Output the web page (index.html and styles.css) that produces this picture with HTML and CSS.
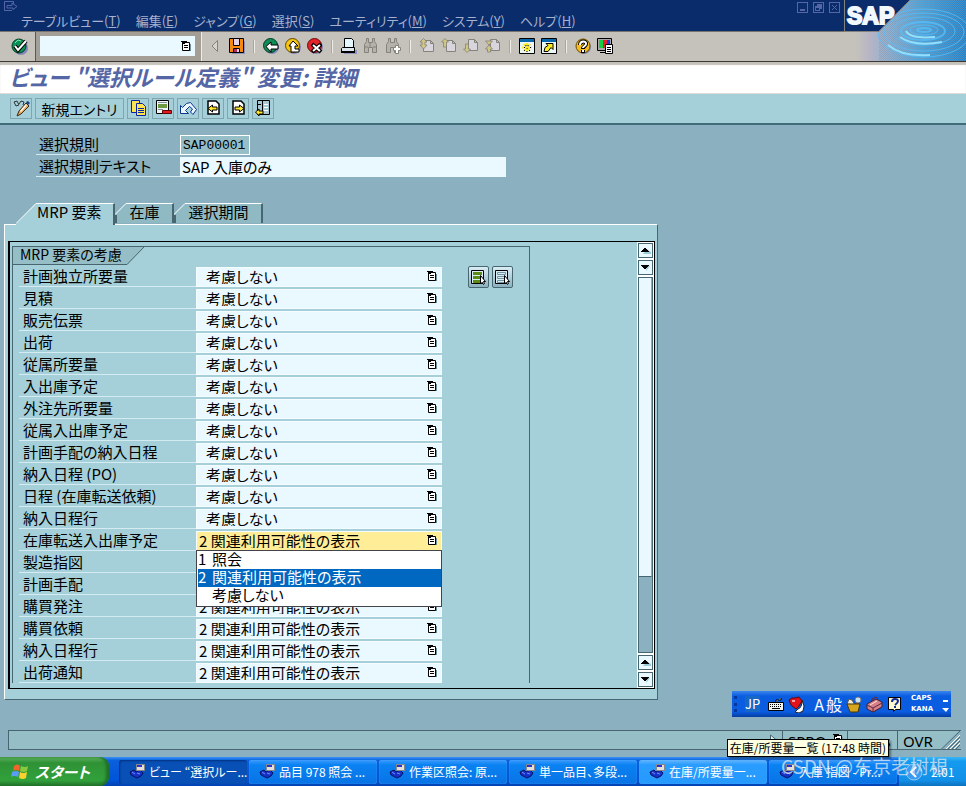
FILE: index.html
```html
<!DOCTYPE html>
<html lang="ja">
<head>
<meta charset="utf-8">
<title>ビュー "選択ルール定義" 変更: 詳細</title>
<link rel="stylesheet" href="styles.css">
</head>
<body>
<svg class="sprite" aria-hidden="true">
  <symbol id="list" viewBox="0 0 10 11"><path fill="#6f8f9b" d="M3 10h7V3H9v6H3z"/><path fill="#fff" stroke="#000" d="M1.500 1.500h7v8h-7z"/><path fill="#000" d="M0 0h6v1H5v1H4v1H2V2H1V1H0zM3 4h4v1H3zM3 6h4v1H3z"/></symbol>
  <symbol id="check" viewBox="0 0 18 18"><circle cx="10" cy="10" r="7" fill="#8287b9"/><circle cx="8" cy="8" r="7" fill="#079356" stroke="#033b25"/><path d="M4 5l3-3 3 1" stroke="#7fe2b4" fill="none"/><path d="M4 8l3 4 8-9" fill="none" stroke="#000" stroke-width="4"/><path d="M4 8l3 4 8-9" fill="none" stroke="#fff" stroke-width="2"/></symbol>
  <symbol id="save" viewBox="0 0 17 17"><path fill="#8f94bd" d="M3 3h13v13H3z"/><path fill="#f68a11" stroke="#000" d="M.5.5h14v14H.5z"/><path fill="#e6d3e7" stroke="#000" d="M4.500.5h6v7h-6zM4.500 10.500h6v4h-6z"/><path fill="#a6305e" d="M5 11h3v3H5z"/></symbol>
  <symbol id="back" viewBox="0 0 17 17"><circle cx="9" cy="9" r="7" fill="#8287b9"/><circle cx="7.500" cy="7.500" r="7" fill="#108d56" stroke="#033b25"/><path fill="#fff" stroke="#000" d="M3 8.500L8 4v3h7v4H8v3z"/></symbol>
  <symbol id="exit" viewBox="0 0 17 17"><circle cx="9" cy="9" r="7" fill="#8287b9"/><circle cx="7.500" cy="7.500" r="7" fill="#f5c513" stroke="#5e4a00"/><path fill="#fff" stroke="#000" d="M4 8l4-5 5 5h-3v3h4v3H6V8z"/></symbol>
  <symbol id="cancel" viewBox="0 0 17 17"><circle cx="9" cy="9" r="7" fill="#8287b9"/><circle cx="7.500" cy="7.500" r="7" fill="#e4232b" stroke="#6d080c"/><path stroke="#000" stroke-width="4" d="M5 6l9 8M14 6l-9 8"/><path stroke="#fff" stroke-width="2" d="M6 7l7 6M13 7l-7 6"/></symbol>
  <symbol id="print" viewBox="0 0 17 17"><path fill="#8f94bd" d="M3 12h13v4H3z"/><path fill="#e6f8ff" stroke="#000" d="M3.500.5h7l2 2v7h-9z"/><path fill="#dce6ec" stroke="#000" d="M1.500 9.500h12v4H.500v-3z"/><path d="M0 14h14" stroke="#000" stroke-width="2"/></symbol>
  <symbol id="find" viewBox="0 0 17 17"><path fill="#b5b2ab" stroke="#85827b" d="M3.500.5h2v4h4v-4h2v3l2 3v8h-4v-5h-4v5h-4v-8l2-3z"/><path d="M7 5v5M2 9h3M10 9h3" stroke="#85827b" fill="none"/></symbol>
  <symbol id="findn" viewBox="0 0 17 17"><path fill="#b5b2ab" stroke="#85827b" d="M3.500.5h2v4h4v-4h2v3l2 3v8h-4v-5h-4v5h-4v-8l2-3z"/><path fill="#fff" stroke="#85827b" d="M10.500 7.500h3v2h2v3h-2v3h-3v-3h-2v-3h2z"/></symbol>
  <symbol id="first" viewBox="0 0 17 17"><path fill="#d9d5dd" stroke="#85827b" d="M4.500 2.500h7l3 3v8h-10zM11.500 2.500v3h3"/><path fill="#d0c783" stroke="#85827b" stroke-width=".8" d="M1 4l3.500-3.500L8 4H6v3h2l-3.500 4L1 7h2V4z"/></symbol>
  <symbol id="prev" viewBox="0 0 17 17"><path fill="#d9d5dd" stroke="#85827b" d="M5.500 2.500h6l3 3v8h-9zM11.500 2.500v3h3"/><path fill="#d0c783" stroke="#85827b" stroke-width=".8" d="M.5 4L4 .5 7.500 4H5.500v5h-3V4z"/></symbol>
  <symbol id="next" viewBox="0 0 17 17"><path fill="#d9d5dd" stroke="#85827b" d="M5.500 1.500h6l3 3v8h-9zM11.500 1.500v3h3"/><path fill="#d0c783" stroke="#85827b" stroke-width=".8" d="M.5 11L4 14.500 7.500 11H5.500V6h-3v5z"/></symbol>
  <symbol id="last" viewBox="0 0 17 17"><path fill="#d9d5dd" stroke="#85827b" d="M5.500 1.500h6l3 3v8h-9zM11.500 1.500v3h3"/><path fill="#d0c783" stroke="#85827b" stroke-width=".8" d="M.5 3h7L4 7zM.5 11L4 7l3.500 4h-2v3h-3v-3z"/></symbol>
  <symbol id="session" viewBox="0 0 17 17"><path fill="#edf8f6" stroke="#000" d="M.5.5h15v15H.5z"/><path fill="#0868ae" d="M1 1h14v3H1z"/><path stroke="#000" d="M8 5v9M3 9.500h10M5 6l6 7M11 6l-6 7"/><path stroke="#ffed23" stroke-width="2" stroke-dasharray="2 1" d="M8 5v9M3 9.500h10M5 6l6 7M11 6l-6 7"/></symbol>
  <symbol id="shortcut" viewBox="0 0 17 17"><path fill="#edf8f6" stroke="#000" d="M.5.5h15v15H.5z"/><path fill="#0868ae" d="M1 1h14v3H1z"/><path fill="#ffed23" stroke="#000" d="M5 5.500h7v6l-2-2-3 4H3l1-4 3-2z"/></symbol>
  <symbol id="help" viewBox="0 0 17 17"><circle cx="9" cy="9" r="7" fill="#8287b9"/><circle cx="8" cy="8" r="7" fill="#f5bc20" stroke="#6e4c00"/><path d="M5 7c0-5 7-4 6-1 0 2-3 2-3 5M8 12v3" fill="none" stroke="#000" stroke-width="4"/><path d="M5 7c0-5 7-4 6-1 0 2-3 2-3 4M8 12v2" fill="none" stroke="#fff" stroke-width="2"/></symbol>
  <symbol id="layout" viewBox="0 0 17 17"><path fill="#aaa" stroke="#000" d="M.5.500h14v12H.5zM3 14.500h7"/><path fill="#17ce40" d="M2 2h4v8H2z"/><path fill="#e71f2d" d="M6 2h4v8H6z"/><path fill="#173bd6" d="M10 2h3v8h-3z"/><path fill="#fff" stroke="#000" d="M8.500 6.500h7v9h-7zM10 9.500h4M10 11.500h4M10 13.500h4"/></symbol>
  <symbol id="edit" viewBox="0 0 17 17"><path fill="none" stroke="#222" stroke-width=".9" d="M1 2l3-1 2 4-3 1zM6 4l2-3 3 1-1 3"/><path fill="#eaa750" stroke="#382819" d="M6 11l7-8 3 3-8 8-4 2z"/><path fill="#fff" d="M7 11l6-7 1 1-6 7z"/><path fill="#14448c" d="M13 2l2-1 2 2-2 2z"/></symbol>
  <symbol id="copy" viewBox="0 0 17 17"><path fill="#ffe451" stroke="#0824a5" d="M1.500.5h8v12h-8z"/><path fill="#ffe451" stroke="#0824a5" d="M6.500 3.500h6l3 3v9h-9z"/><path d="M8 8.500h6M8 10.500h6M8 12.500h6" stroke="#0824a5"/></symbol>
  <symbol id="delete" viewBox="0 0 17 17"><path fill="#edf8f6" stroke="#000" d="M1.500.5h12v13h-12z"/><path fill="#6d9a42" d="M3 4h9v4H3z"/><path stroke="#7c8f98" d="M3 2.500h9M3 9.500h5"/><path fill="#e6171f" stroke="#5e0407" d="M7.500 10.500h9v3h-9z"/></symbol>
  <symbol id="undo" viewBox="0 0 17 17"><path fill="#ebf6ff" stroke="#0b348e" d="M.5 5.500v8h8l-3-3 4-4 3 2.500-2 3 2.500 2.500 3.500-5-6-7-4 1-4 4z"/></symbol>
  <symbol id="pleft" viewBox="0 0 17 17"><path fill="#fff" stroke="#000" stroke-width="1.500" d="M3 1h8l3 3v10H3z"/><path fill="#ffe52c" stroke="#000" d="M3 8.500L7.500 5v2H12v3H7.500v2z"/></symbol>
  <symbol id="pright" viewBox="0 0 17 17"><path fill="#fff" stroke="#000" stroke-width="1.500" d="M3 1h8l3 3v10H3z"/><path fill="#ffe52c" stroke="#000" d="M14 8.500L9.500 5v2H5v3h4.500v2z"/></symbol>
  <symbol id="position" viewBox="0 0 17 17"><path fill="#a7c7d4" stroke="#000" d="M2.500.5h12v14h-12zM7.500.5v14"/><path d="M9 4.500h4M9 7.500h4M9 10.500h4" stroke="#fff"/><path fill="#ffe52c" stroke="#000" d="M.5 12L4 9v2h4v3H4v2z"/><path d="M3 4.500h3" stroke="#000"/></symbol>
  <symbol id="selall" viewBox="0 0 17 17"><path fill="#d9edf4" stroke="#000" d="M1.500 1.500h12v13h-12z"/><path stroke="#5b8b16" stroke-width="3" d="M3 4.500h9M3 8.500h9M3 12.500h9"/><path fill="#fff" stroke="#000" d="M10.500 6.500v8l2-1 1 2 1-1-1-2h2z"/></symbol>
  <symbol id="selnone" viewBox="0 0 17 17"><path fill="#d9edf4" stroke="#000" d="M1.500 1.500h12v13h-12z"/><path fill="none" stroke="#7392a0" d="M3.500 3.500h8v2h-8zM3.500 7.500h8v2h-8zM3.500 11.500h8v2h-8z"/><path fill="#fff" stroke="#000" d="M10.500 6.500v8l2-1 1 2 1-1-1-2h2z"/></symbol>
  <symbol id="up" viewBox="0 0 11 9"><path fill="#9ccbd7" d="M3 8h8V6L7 3z"/><path d="M1 6h8V5H8V4H7V3H6V2H4v1H3v1H2v1H1z"/></symbol>
  <symbol id="down" viewBox="0 0 11 9"><path fill="#9ccbd7" d="M6 8l4-5-3-1z"/><path d="M1 2h8v1H8v1H7v1H6v1H4V5H3V4H2V3H1z"/></symbol>
  <symbol id="app" viewBox="0 0 17 17"><path fill="#1730c8" stroke="#001264" d="M1 9l4-2 2 2 4-2 3 3-2 3-4 2-6-3z"/><path stroke="#6f8bff" d="M3 9l3 2M8 10l3 1"/><path fill="#e3dfda" stroke="#888" d="M7.500 1.500h8v6h-8z"/><path fill="#2634d6" d="M8 2h5v2H8z"/></symbol>
</svg>

<header class="head">
  <nav class="menubar">
    <svg class="sysicon" width="16" height="12" viewBox="0 0 16 12"><path fill="none" stroke="#5466a5" d="M10 10.500H2.500v-9h9V4M5 5.500h5V3l5 3.500-4 3V8H5z"/></svg>
    <a href="#">テーブルビュー(<u>T</u>)</a><a href="#">編集(<u>E</u>)</a><a href="#">ジャンプ(<u>G</u>)</a><a href="#">選択(<u>S</u>)</a><a href="#">ユーティリティ(<u>M</u>)</a><a href="#">システム(<u>Y</u>)</a><a href="#">ヘルプ(<u>H</u>)</a>
    <div class="winbtns">
      <button aria-label="最小化"><svg viewBox="0 0 11 11"><path fill="#5466a5" d="M3 7h5v2H3z"/></svg></button>
      <button aria-label="元に戻す"><svg viewBox="0 0 11 11"><path fill="#5466a5" d="M4 2h5v5H7v2H2V4h2z"/><path fill="#0a2c6b" d="M3 6h3v2H3z"/></svg></button>
      <button aria-label="閉じる"><svg viewBox="0 0 11 11"><path stroke="#5466a5" d="M3 3l5 5M8 3L3 8"/></svg></button>
    </div>
  </nav>
  <div class="toolbar">
    <button class="tool enter" aria-label="実行"><svg><use href="#check"/></svg></button>
    <div class="command"><input type="text" aria-label="コマンド"><svg class="listicon"><use href="#list"/></svg></div>
    <button class="tool narrow" aria-label="閉じる"><svg viewBox="0 0 17 17"><path fill="#d6d3cc" stroke="#85827b" d="M10.500 2.500v11L5 8z"/></svg></button>
    <button class="tool" aria-label="保存"><svg><use href="#save"/></svg></button>
    <i class="sep"></i>
    <button class="tool" aria-label="戻る"><svg><use href="#back"/></svg></button>
    <button class="tool" aria-label="終了"><svg><use href="#exit"/></svg></button>
    <button class="tool" aria-label="取消"><svg><use href="#cancel"/></svg></button>
    <i class="sep"></i>
    <button class="tool" aria-label="印刷"><svg><use href="#print"/></svg></button>
    <button class="tool" aria-label="検索"><svg><use href="#find"/></svg></button>
    <button class="tool" aria-label="次を検索"><svg><use href="#findn"/></svg></button>
    <i class="sep"></i>
    <button class="tool" aria-label="最初のページ"><svg><use href="#first"/></svg></button>
    <button class="tool" aria-label="前ページ"><svg><use href="#prev"/></svg></button>
    <button class="tool" aria-label="次ページ"><svg><use href="#next"/></svg></button>
    <button class="tool" aria-label="最終ページ"><svg><use href="#last"/></svg></button>
    <i class="sep"></i>
    <button class="tool" aria-label="新規セッション"><svg><use href="#session"/></svg></button>
    <button class="tool" aria-label="ショートカット"><svg><use href="#shortcut"/></svg></button>
    <i class="sep"></i>
    <button class="tool" aria-label="ヘルプ"><svg><use href="#help"/></svg></button>
    <button class="tool" aria-label="レイアウト"><svg><use href="#layout"/></svg></button>
  </div>
  <svg class="logo" viewBox="0 0 122 61">
    <defs>
      <linearGradient id="water"><stop offset="0" stop-color="#c5c2bb"/><stop offset=".12" stop-color="#b7b5c4"/><stop offset=".3" stop-color="#90b1d2"/><stop offset=".6" stop-color="#4aa5de"/><stop offset="1" stop-color="#1b84cf"/></linearGradient>
      <pattern id="dots" width="2" height="2" patternUnits="userSpaceOnUse"><path fill="#8290a5" fill-opacity=".45" d="M0 0h1v1H0zM1 1h1v1H1z"/></pattern>
    </defs>
    <path fill="url(#water)" d="M12 0h110v61H12z"/>
    <path fill="url(#dots)" d="M35 0h87v61H35z"/>
    <g fill="none" stroke="#59bdf8" stroke-opacity=".8">
      <ellipse cx="80" cy="30" rx="7" ry="2" stroke-width="2"/><ellipse cx="80" cy="30" rx="14" ry="5"/><ellipse cx="79" cy="31" rx="22" ry="9" stroke-width="2"/><ellipse cx="80" cy="31" rx="31" ry="14"/><ellipse cx="80" cy="32" rx="40" ry="19"/><ellipse cx="80" cy="33" rx="46" ry="24"/>
    </g>
    <g fill="none" stroke="#91e0ff" stroke-width="2"><path d="M56 37q14 10 42 5M44 45q14 12 42 10M62 31q4 8 29 6"/></g>
    <path fill="#0a2c6b" d="M0 0h66L35 31H0z"/>
    <path fill="none" stroke="#85827b" d="M.5 0v31.500H35L66 0"/>
    <text x="3" y="24" class="logotext">SAP</text>
  </svg>
</header>

<h1>ビュー "選択ルール定義" 変更: 詳細</h1>

<div class="appbar">
  <button aria-label="変更"><svg><use href="#edit"/></svg></button>
  <button class="wide">新規エントリ</button>
  <button aria-label="コピー"><svg><use href="#copy"/></svg></button>
  <button aria-label="削除"><svg><use href="#delete"/></svg></button>
  <button aria-label="元に戻す"><svg><use href="#undo"/></svg></button>
  <button aria-label="前エントリ"><svg><use href="#pleft"/></svg></button>
  <button aria-label="次エントリ"><svg><use href="#pright"/></svg></button>
  <button aria-label="位置付け"><svg><use href="#position"/></svg></button>
</div>

<main>
  <div class="keys">
    <label for="rule">選択規則</label><input id="rule" class="key" value="SAP00001" readonly>
    <label for="ruletext">選択規則テキスト</label><input id="ruletext" value="SAP 入庫のみ">
  </div>

  <div class="tabs" role="tablist">
    <button class="tab active" role="tab" aria-selected="true"><svg width="21" height="22" viewBox="0 0 21 22"><path fill="#a5d0d9" d="M0 22v-1L20 0h1v22z"/><path fill="none" stroke="#fff" d="M0 20.500L20 .5h1"/></svg><span>MRP 要素</span></button>
    <button class="tab" role="tab"><svg width="12" height="20" viewBox="0 0 12 20"><path fill="#8fbac4" d="M0 20V11L11 0h1v20z"/><path fill="none" stroke="#fff" d="M0 11.500L11 .5h1"/><path stroke="#47666f" stroke-width="2" d="M1 12v8"/></svg><span>在庫</span></button>
    <button class="tab" role="tab"><svg width="12" height="20" viewBox="0 0 12 20"><path fill="#8fbac4" d="M0 20V11L11 0h1v20z"/><path fill="none" stroke="#fff" d="M0 11.500L11 .5h1"/><path stroke="#47666f" stroke-width="2" d="M1 12v8"/></svg><span>選択期間</span></button>
  </div>

  <section class="panel">
    <div class="scrollbox">
      <div class="group">
        <h2><span>MRP 要素の考慮</span><svg width="19" height="18" viewBox="0 0 19 18"><path fill="#95bec7" d="M0 0h18L1 18H0z"/><path d="M18 0L1 17.500H0" fill="none" stroke="#47666f"/></svg></h2>
        <div class="groupbody">
          <div class="rows">
            <div class="row"><label for="r1">計画独立所要量</label><span class="pick none"><select id="r1"><option>考慮しない</option></select><svg class="listicon"><use href="#list"/></svg></span></div>
            <div class="row"><label for="r2">見積</label><span class="pick none"><select id="r2"><option>考慮しない</option></select><svg class="listicon"><use href="#list"/></svg></span></div>
            <div class="row"><label for="r3">販売伝票</label><span class="pick none"><select id="r3"><option>考慮しない</option></select><svg class="listicon"><use href="#list"/></svg></span></div>
            <div class="row"><label for="r4">出荷</label><span class="pick none"><select id="r4"><option>考慮しない</option></select><svg class="listicon"><use href="#list"/></svg></span></div>
            <div class="row"><label for="r5">従属所要量</label><span class="pick none"><select id="r5"><option>考慮しない</option></select><svg class="listicon"><use href="#list"/></svg></span></div>
            <div class="row"><label for="r6">入出庫予定</label><span class="pick none"><select id="r6"><option>考慮しない</option></select><svg class="listicon"><use href="#list"/></svg></span></div>
            <div class="row"><label for="r7">外注先所要量</label><span class="pick none"><select id="r7"><option>考慮しない</option></select><svg class="listicon"><use href="#list"/></svg></span></div>
            <div class="row"><label for="r8">従属入出庫予定</label><span class="pick none"><select id="r8"><option>考慮しない</option></select><svg class="listicon"><use href="#list"/></svg></span></div>
            <div class="row"><label for="r9">計画手配の納入日程</label><span class="pick none"><select id="r9"><option>考慮しない</option></select><svg class="listicon"><use href="#list"/></svg></span></div>
            <div class="row"><label for="r10">納入日程 (PO)</label><span class="pick none"><select id="r10"><option>考慮しない</option></select><svg class="listicon"><use href="#list"/></svg></span></div>
            <div class="row"><label for="r11">日程 (在庫転送依頼)</label><span class="pick none"><select id="r11"><option>考慮しない</option></select><svg class="listicon"><use href="#list"/></svg></span></div>
            <div class="row"><label for="r12">納入日程行</label><span class="pick none"><select id="r12"><option>考慮しない</option></select><svg class="listicon"><use href="#list"/></svg></span></div>
            <div class="row"><label for="r13">在庫転送入出庫予定</label><span class="pick open"><select id="r13"><option>2 関連利用可能性の表示</option></select><svg class="listicon"><use href="#list"/></svg>
              <ul class="menu" role="listbox"><li role="option"><b>1</b>照会</li><li role="option" aria-selected="true"><b>2</b>関連利用可能性の表示</li><li role="option"><b></b>考慮しない</li></ul></span></div>
            <div class="row"><label for="r14">製造指図</label><span class="pick"><select id="r14"><option>2 関連利用可能性の表示</option></select><svg class="listicon"><use href="#list"/></svg></span></div>
            <div class="row"><label for="r15">計画手配</label><span class="pick"><select id="r15"><option>2 関連利用可能性の表示</option></select><svg class="listicon"><use href="#list"/></svg></span></div>
            <div class="row"><label for="r16">購買発注</label><span class="pick"><select id="r16"><option>2 関連利用可能性の表示</option></select><svg class="listicon"><use href="#list"/></svg></span></div>
            <div class="row"><label for="r17">購買依頼</label><span class="pick"><select id="r17"><option>2 関連利用可能性の表示</option></select><svg class="listicon"><use href="#list"/></svg></span></div>
            <div class="row"><label for="r18">納入日程行</label><span class="pick"><select id="r18"><option>2 関連利用可能性の表示</option></select><svg class="listicon"><use href="#list"/></svg></span></div>
            <div class="row"><label for="r19">出荷通知</label><span class="pick"><select id="r19"><option>2 関連利用可能性の表示</option></select><svg class="listicon"><use href="#list"/></svg></span></div>
          </div>
          <div class="selbtns">
            <button aria-label="全選択"><svg><use href="#selall"/></svg></button>
            <button aria-label="全選択解除"><svg><use href="#selnone"/></svg></button>
          </div>
        </div>
      </div>
      <div class="scrollbar">
        <button aria-label="上へ"><svg><use href="#up"/></svg></button>
        <button aria-label="下へ"><svg><use href="#down"/></svg></button>
        <div class="track"><div class="thumb"></div></div>
        <button aria-label="上へ"><svg><use href="#up"/></svg></button>
        <button aria-label="下へ"><svg><use href="#down"/></svg></button>
      </div>
    </div>
  </section>
</main>

<footer class="status">
  <span class="message"></span>
  <svg class="expander" width="12" height="18" viewBox="0 0 12 18"><path fill="#dff2f6" stroke="#47666f" d="M1.500 4v11L8 9.500z"/></svg>
  <span class="cell">SPRO</span>
  <svg class="cellicon"><use href="#list"/></svg>
  <span class="cell system">ps-ps</span>
  <span class="cell ovr">OVR</span>
  <svg class="grip" width="21" height="20" viewBox="0 0 21 20"><path fill="#95bec7" d="M0 0h20L1 20H0z"/><path fill="none" stroke="#47666f" d="M0 .5h20M20 1L1 19.500H0"/><path stroke="#47666f" d="M7 20L20 7M11 20l9-9M15 20l5-5"/><path stroke="#fff" d="M6 19L20 5M10 19L20 9M14 19l6-6"/></svg>
</footer>

<div class="taskbar">
  <button class="start"><svg width="18" height="18" viewBox="0 0 18 18"><path fill="#f26429" d="M3 3q3-3 6 0L8 8Q5 6 2 8z"/><path fill="#88c93e" d="M10 3q4 2 7 0l-1 5q-3 2-7 0z"/><path fill="#5b9cf5" d="M1 9q4-2 7 0l-1 5q-4-2-7 0z"/><path fill="#fbd22c" d="M9 9q3 2 7 0l-1 6q-3 2-7 0z"/></svg>スタート</button>
  <button class="task current"><svg><use href="#app"/></svg>ビュー “選択ルー...</button>
  <button class="task"><svg><use href="#app"/></svg>品目 978 照会 ...</button>
  <button class="task"><svg><use href="#app"/></svg>作業区照会: 原...</button>
  <button class="task"><svg><use href="#app"/></svg>単一品目、多段...</button>
  <button class="task hover"><svg><use href="#app"/></svg>在庫/所要量一...</button>
  <button class="task"><svg><use href="#app"/></svg>入庫 指図 - Pr...</button>
  <div class="tray"><svg width="18" height="18" viewBox="0 0 18 18"><circle cx="9" cy="9" r="8" fill="#3b9bf0" stroke="#8fc8f8"/><path d="M11 4L6 9l5 5" fill="none" stroke="#fff" stroke-width="2"/></svg><time>2:01</time></div>
</div>

<div class="langbar">
  <i class="handle"></i><span class="jp">JP</span>
  <svg width="17" height="17" viewBox="0 0 17 17"><path fill="#f4f4ee" stroke="#000" d="M.5 6.500h15v8H.5zM8 6V4h5V2"/><path stroke="#000" stroke-dasharray="1 1" d="M2 8.500h12M2 10.500h12"/><path stroke="#000" d="M4 12.500h8"/></svg>
  <svg width="17" height="17" viewBox="0 0 17 17"><path fill="#fff" stroke="#222" d="M10 13q4-1 4-9l2 6-1 5-4 2-4-1z"/><path fill="#e1121c" stroke="#640509" d="M1 4l3-2 3 0 4-1 3 4-3 5-3 3-5-4z"/><path fill="#ff9ca1" d="M4 4h3v2H4z"/></svg>
  <span class="mode">A</span><span class="mode">般</span>
  <svg width="17" height="17" viewBox="0 0 17 17"><path fill="#f4efd2" stroke="#555" d="M1 8l2-5 3 1 3 5z"/><path d="M12 6L9 12" stroke="#a66114" stroke-width="2"/><circle cx="12" cy="4" r="3" fill="#c6e3fa" stroke="#777"/><path fill="#d8a51f" stroke="#493708" d="M1 8h13l-2 8H4z"/></svg>
  <svg width="17" height="17" viewBox="0 0 17 17"><path fill="#d57f8b" stroke="#4a1d24" d="M1 8l9-5 6 3v5l-9 5-6-3z"/><path d="M1 9l6 3 9-5M7 12v4M6 5V3l4-2 2 2" fill="none" stroke="#642b34"/><path d="M4 9l7-4" stroke="#ffe0d4"/></svg>
  <svg width="17" height="17" viewBox="0 0 17 17"><path fill="#fffbd0" stroke="#000" d="M2.500 1.500h12v12h-5l-2 2v-2h-5z"/><path d="M6 6q0-3 3-3t3 2-3 4M9 10v2" fill="none" stroke="#112a9c" stroke-width="2"/></svg>
  <span class="keysstate">CAPS<br>KANA</span>
  <svg width="9" height="17" viewBox="0 0 9 17"><path fill="#fff" d="M2 4h5v2H2zM1 12h7l-3 4z"/></svg>
</div>
<div class="tip" role="tooltip">在庫/所要量一覧 (17:48 時間)</div>
<div class="mark">CSDN @东京老树根</div>
</body>
</html>
```
FILE: styles.css
```css
* { box-sizing: border-box; }
body {
  margin: 0;
  min-height: 100vh;
  position: relative;
  display: flex;
  flex-direction: column;
  overflow: hidden;
  background: #8bb1c0;
  color: #000;
  font: 15px/20px "Noto Sans CJK JP", sans-serif;
  font-feature-settings: "palt";
}
button, input, select {
  font: inherit;
  font-feature-settings: inherit;
  color: inherit;
  margin: 0;
  padding: 0;
  border: 0;
  border-radius: 0;
  background: none;
}
svg { display: block; flex: none; }
.sprite { position: absolute; width: 0; height: 0; }
.listicon { width: 10px; height: 11px; }

/* window header */
.head { display: grid; grid-template-columns: 1fr 122px; grid-template-rows: 31px 30px; }
.menubar {
  grid-area: 1 / 1;
  display: flex;
  align-items: flex-end;
  gap: 15px;
  padding-left: 2px;
  background: #0a2c6b;
}
.menubar a { color: #a6b1cd; text-decoration: none; font-size: 13px; }
.sysicon { align-self: flex-start; margin-right: -12px; }
.winbtns { display: flex; gap: 5px; margin-left: auto; align-self: flex-start; padding: 2px 4px 0 0; }
.winbtns button { width: 11px; height: 11px; outline: 1px solid #5466a5; outline-offset: -1px; }
.toolbar {
  grid-area: 2 / 1 / 3 / 3;
  display: flex;
  align-items: center;
  background: #c5c2bb;
  border-top: 1px solid #77746f;
}
.tool { width: 22px; height: 22px; display: grid; place-items: center start; padding-left: 3px; }
.tool svg { width: 17px; height: 17px; }
.enter { width: 35px; padding-left: 11px; }
.enter svg { width: 18px; height: 18px; }
.narrow { margin-left: 2px; }
.command {
  display: flex;
  align-items: center;
  width: 167px;
  height: 29px;
  padding: 4px 6px 5px 4px;
  background: #a39e96;
  border-left: 1px solid #5c5954;
  border-right: 1px solid #eee;
}
.command input { width: 100%; height: 20px; padding-right: 20px; background: #eaf8ff; border-radius: 0; }
.command .listicon { margin-left: -14px; }
.sep { width: 2px; height: 13px; margin: 0 5px; background: #eeece6; border-left: 1px solid #aaa69e; }
.logo { grid-area: 1 / 2 / 3 / 3; width: 122px; height: 61px; }
.logotext { font: bold 23px "Liberation Sans", sans-serif; fill: #f1f9ff; stroke: #f1f9ff; stroke-width: 2px; }
h1 {
  margin: 0;
  padding: 0 0 0 9px;
  height: 33px;
  font-size: 22px;
  line-height: 28px;
  font-style: italic;
  font-weight: bold;
  color: #5466a5;
  background: #fff;
  border-top: 1px solid #3e3835;
  border-bottom: 1px solid #dfdcd6;
  box-shadow: inset 0 3px 1px #c5c2bb;
}
.appbar {
  display: flex;
  align-items: center;
  gap: 3px;
  height: 31px;
  padding: 0 10px;
  background: #a5d0d9;
  border-bottom: 2px solid #3f6c78;
}
.appbar button {
  width: 22px;
  height: 21px;
  display: grid;
  place-items: center;
  border: 1px solid #7fa5af;
}
.appbar svg { width: 17px; height: 17px; }
.appbar .wide { width: 89px; font-size: 14px; line-height: 18px; }

/* key fields */
main { flex: 1; padding: 10px 4px 0; }
.keys {
  display: grid;
  grid-template-columns: 144px 1fr;
  row-gap: 2px;
  width: 470px;
  margin-left: 32px;
}
.keys label { border-bottom: 1px solid #d5ebf2; padding-left: 3px; height: 20px; line-height: 18px; }
.keys input { height: 20px; width: 100%; padding-left: 2px; background: #eaf8ff; }
.keys .key {
  width: 70px;
  border: 1px solid #fff;
  background: #95bec7;
  font: 13px "Liberation Mono", monospace;
}

/* tab strip */
.tabs { display: flex; align-items: flex-start; margin: 26px 0 -1px 12px; position: relative; }
.tab { display: flex; }
.tab span {
  height: 20px;
  padding: 0 12px 0 3px;
  border-top: 1px solid #fff;
  border-right: 2px solid #47666f;
  background: #8fbac4;
  line-height: 16px;
}
.tab.active span { height: 22px; padding: 0 11px 0 0; background: #a5d0d9; }
.panel {
  width: 654px;
  max-width: 100%;
  padding: 16px 2px 10px 3px;
  background: #a5d0d9;
  border: 1px solid #fff;
  border-right-color: #47666f;
  border-bottom-color: #47666f;
}
.scrollbox {
  display: flex;
  justify-content: space-between;
  border: 1px solid #000;
  border-left-width: 2px;
}
.group {
  width: 518px;
  margin: 4px 0 5px 2px;
  border: 1px solid #47666f;
  border-bottom: 0;
}
h2 { display: flex; margin: 0; font-size: 14px; line-height: 15px; font-weight: normal; height: 18px; }
h2 span { padding: 0 4px 0 7px; background: #95bec7; border-bottom: 1px solid #47666f; }
.groupbody { display: flex; padding: 2px 0 0 6px; gap: 26px; }
.rows { display: grid; row-gap: 2px; }
.row { display: grid; grid-template-columns: 177px 246px; height: 20px; }
.row label { padding-left: 4px; border-bottom: 1px solid #d5ebf2; line-height: 18px; }
.pick { position: relative; display: flex; align-items: center; background: #eaf8ff; border: 1px solid #f4fcff; }
.pick select { appearance: none; width: 100%; height: 18px; line-height: 18px; padding: 0 0 2px 2px; outline: 0; }
.pick.none select { padding-left: 9px; }
.pick.open { background: #ffed97; }
.pick .listicon { position: absolute; right: 4px; top: 3px; }
.menu {
  position: absolute;
  z-index: 2;
  top: 18px;
  left: -1px;
  right: -1px;
  margin: 0;
  padding: 0 0 1px 1px;
  list-style: none;
  background: #fff;
  border: 1px solid #45434a;
}
.menu li { display: flex; height: 18px; line-height: 16px; }
.menu b { width: 14px; font-weight: normal; }
.menu [aria-selected] { background: #0068c0; color: #fff; }
.selbtns { display: flex; gap: 3px; margin-top: -1px; }
.selbtns button {
  width: 21px;
  height: 22px;
  display: grid;
  place-items: center;
  border: 1px solid #47666f;
  border-radius: 2px;
  background: linear-gradient(#d9edf4, #8bb1c0);
}
.selbtns svg { width: 17px; height: 17px; }
.scrollbar { display: flex; flex-direction: column; gap: 2px; width: 17px; padding: 1px; background: #fff; }
.scrollbar button { width: 15px; height: 15px; border: 1px solid #47666f; background: #eaf8ff; display: grid; place-items: center; }
.scrollbar svg { width: 11px; height: 9px; }
.track { flex: 1; background: #8bb1c0; border: 1px solid #47666f; }
.thumb { height: 80%; background: #eaf8ff; border-right: 1px solid #8bb1c0; border-bottom: 1px solid #47666f; }

/* status line */
.status {
  display: flex;
  height: 20px;
  margin: 0 5px 7px 8px;
  background: linear-gradient(to left, transparent 21px, #95bec7 21px);
  border: 1px solid #47666f;
  border-right: 0;
  font: 15px/20px "Noto Sans", "Noto Sans CJK JP", sans-serif;
}
.message { flex: 1; }
.cell { border-left: 1px solid #47666f; padding-left: 5px; width: 51px; margin-left: 1px; }
.cellicon { width: 10px; height: 11px; margin: 3px 3px 0 0; }
.cell.system { width: 49px; }
.cell.ovr { width: 43px; }
.grip { margin-top: -1px; }

/* taskbar */
.taskbar {
  display: flex;
  align-items: center;
  gap: 2px;
  height: 29px;
  color: #fff;
  font-size: 12px;
  background: linear-gradient(#3993f5, #0a60dd 12%, #0054d8 80%, #0342ae);
}
.start {
  display: flex;
  align-items: center;
  gap: 6px;
  width: 109px;
  height: 29px;
  margin-right: 8px;
  padding-left: 11px;
  font-size: 15px;
  font-weight: bold;
  font-style: italic;
  border-radius: 0 9px 9px 0;
  background: linear-gradient(#61b561, #2f9236 20%, #31a13b 80%, #22722a);
  box-shadow: inset -3px 0 3px #216d29;
}
.task {
  display: flex;
  align-items: center;
  gap: 3px;
  flex: 0 1 128px;
  height: 24px;
  padding-left: 10px;
  white-space: nowrap;
  overflow: hidden;
  border-radius: 3px;
  background: linear-gradient(#3b9bff, #0b82f2 20%, #0873e5);
  box-shadow: inset 0 0 1px #7abaff;
}
.task svg { width: 17px; height: 17px; }
.task.current { background: #0850b5; box-shadow: inset 1px 1px 2px #003180; }
.task.hover { background: linear-gradient(#63b6ff, #299cff 20%, #259aff); }
.tray {
  display: flex;
  align-items: center;
  gap: 8px;
  flex: 1;
  height: 29px;
  padding-left: 6px;
  background: linear-gradient(#3cb6f5, #139bef 15%, #1290e8 80%, #0d70bd);
}

/* floating layers */
.langbar {
  position: absolute;
  right: 15px;
  bottom: 69px;
  display: flex;
  align-items: center;
  gap: 8px;
  width: 219px;
  height: 26px;
  padding-left: 2px;
  color: #fff;
  background: linear-gradient(#3a85ef, #0a5ce0 20%, #0a5ce0 80%, #053da0);
}
.handle { width: 4px; height: 16px; border-left: 3px dotted #06379d; }
.jp { background: #1767c4; font-size: 13px; line-height: 16px; margin-left: -1px; }
.langbar svg { margin-right: -5px; }
.mode { margin-left: 6px; margin-right: -4px; font-size: 16px; }
.mode + .mode { margin-left: -2px; }
.keysstate { font: bold 7px/11px "DejaVu Sans", sans-serif; margin-left: 5px; }
.tip {
  position: absolute;
  z-index: 3;
  right: 77px;
  bottom: 29px;
  height: 18px;
  padding: 0 2px;
  font-size: 12px;
  line-height: 16px;
  background: #ffffe1;
  border: 1px solid #000;
  box-shadow: 2px 2px 2px rgba(0, 0, 0, .4);
}
.mark {
  position: absolute;
  z-index: 4;
  right: 18px;
  bottom: 8px;
  font: 19px/24px "Noto Sans CJK SC", sans-serif;
  color: rgba(225, 232, 240, .75);
}
```
